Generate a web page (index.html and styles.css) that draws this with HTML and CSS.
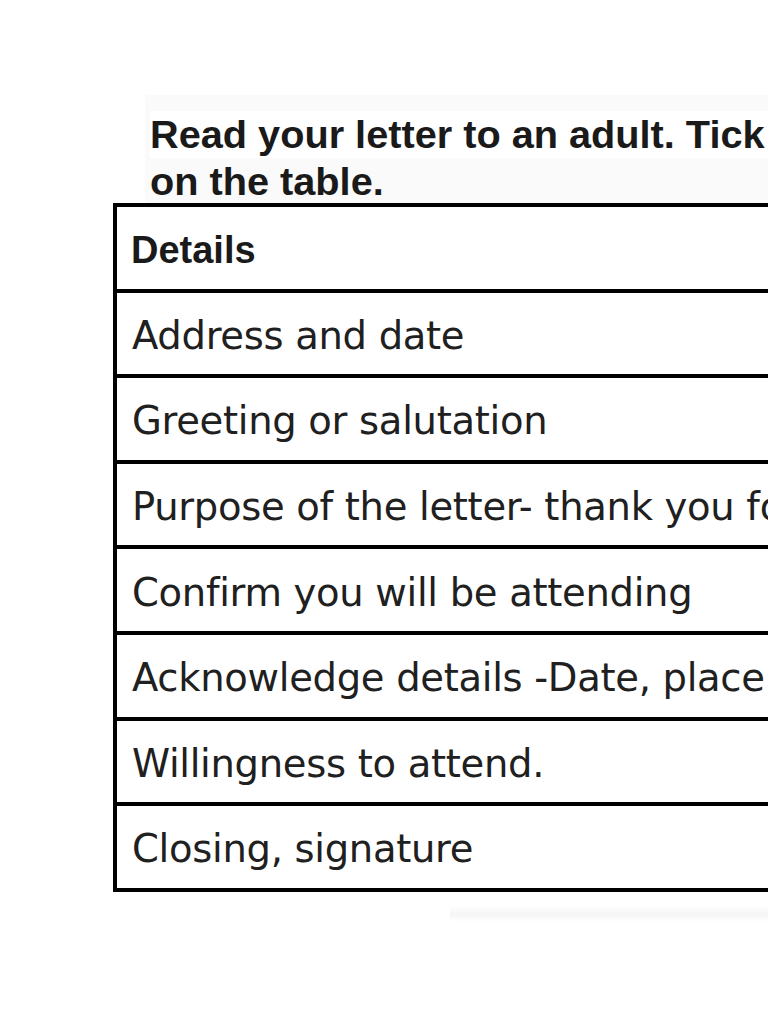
FILE: index.html
```html
<!DOCTYPE html>
<html lang="en">
<head>
<meta charset="utf-8">
<title>Letter checklist</title>
<link rel="stylesheet" href="styles.css">
</head>
<body>
<main class="page">
  <section class="sheet">
    <div class="prompt">
      <p class="prompt-line"><span class="prompt-hl">Read your letter to an adult. Tick (&#10003;) the details you included</span></p>
      <p class="prompt-line">on the table.</p>
    </div>
    <div class="table">
      <div class="row head"><span class="cell">Details</span></div>
      <div class="row"><span class="cell">Address and date</span></div>
      <div class="row"><span class="cell">Greeting or salutation</span></div>
      <div class="row"><span class="cell">Purpose of the letter- thank you for the invitation</span></div>
      <div class="row"><span class="cell">Confirm you will be attending</span></div>
      <div class="row"><span class="cell">Acknowledge details -Date, place and time</span></div>
      <div class="row"><span class="cell">Willingness to attend.</span></div>
      <div class="row"><span class="cell">Closing, signature</span></div>
    </div>
    <div class="scan-shadow"></div>
  </section>
</main>
</body>
</html>
```

FILE: styles.css
```css
html, body {
  margin: 0;
  padding: 0;
  background: #ffffff;
}

body {
  width: 768px;
  height: 1024px;
  overflow: hidden;
  font-family: "DejaVu Sans", "Liberation Sans", sans-serif;
  color: #1c1c1c;
}

.page {
  width: 768px;
  overflow: hidden;
}

.sheet {
  padding-top: 95px;
}

.prompt {
  margin-left: 145px;
  width: 900px;
  padding-top: 16px;
  background: #fafafa;
}

.prompt-line {
  margin: 0;
  padding-left: 5px;
  font-family: "Liberation Sans", Arial, sans-serif;
  font-weight: bold;
  font-size: 39.7px;
  line-height: 47px;
  white-space: nowrap;
  color: #1a1a1a;
}

.prompt-hl {
  display: inline-block;
  background: #ffffff;
}

.table {
  margin-left: 113px;
  width: 900px;
  border-left: 4px solid #000;
  border-top: 4px solid #000;
  margin-top: -2px;
}

.row {
  box-sizing: border-box;
  height: 85.6px;
  border-bottom: 4px solid #000;
  padding-top: 5px;
  display: flex;
  align-items: center;
}

.cell {
  padding-left: 15px;
  font-size: 38.5px;
  line-height: 44px;
  white-space: nowrap;
  letter-spacing: -0.3px;
  color: #202020;
}

.head .cell {
  font-family: "Liberation Sans", Arial, sans-serif;
  font-weight: bold;
  font-size: 38px;
  padding-left: 14px;
  letter-spacing: 0;
  color: #1a1a1a;
}

.scan-shadow {
  margin-left: 450px;
  margin-top: 14px;
  height: 16px;
  background: linear-gradient(to bottom, #ffffff, #f5f5f5 50%, #ffffff);
}
```
